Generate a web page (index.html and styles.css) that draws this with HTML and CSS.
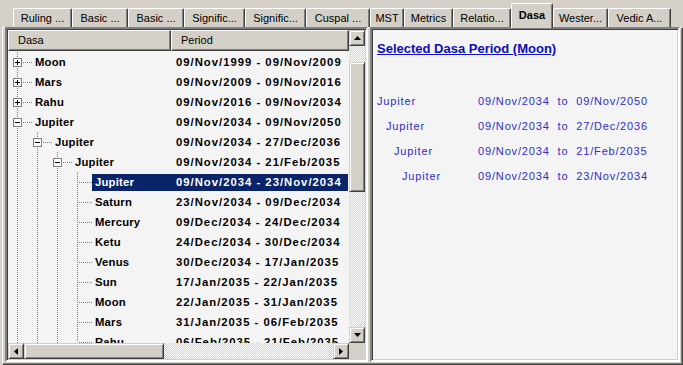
FILE: index.html
```html
<!DOCTYPE html>
<html>
<head>
    <title>Dasa</title>
    <meta charset="utf-8">
    <link rel="stylesheet" href="styles.css">
</head>
<body>
    <div class="tabs">
        <div class="tab t1">Ruling ...</div>
        <div class="tab t2">Basic ...</div>
        <div class="tab t2">Basic ...</div>
        <div class="tab t3">Signific...</div>
        <div class="tab t3">Signific...</div>
        <div class="tab t4">Cuspal ...</div>
        <div class="tab t5">MST</div>
        <div class="tab t6">Metrics</div>
        <div class="tab t7">Relatio...</div>
        <div class="tab active">Dasa</div>
        <div class="tab t8">Wester...</div>
        <div class="tab t9">Vedic A...</div>
    </div>

    <div class="page">
        <!-- dasa tree -->
        <div class="tree">
            <div class="tree-main">
                <div class="hdr">
                    <div class="hcell c1">Dasa</div>
                    <div class="hcell c2">Period</div>
                </div>
                <div class="rows">
                    <div class="row"><i class="node"><b class="box plus"></b></i><div class="cell"><span class="lbl">Moon</span><span class="per">09/Nov/1999 - 09/Nov/2009</span></div></div>
                    <div class="row"><i class="node"><b class="box plus"></b></i><div class="cell"><span class="lbl">Mars</span><span class="per">09/Nov/2009 - 09/Nov/2016</span></div></div>
                    <div class="row"><i class="node"><b class="box plus"></b></i><div class="cell"><span class="lbl">Rahu</span><span class="per">09/Nov/2016 - 09/Nov/2034</span></div></div>
                    <div class="row"><i class="node"><b class="box minus"></b></i><div class="cell"><span class="lbl">Jupiter</span><span class="per">09/Nov/2034 - 09/Nov/2050</span></div></div>
                    <div class="row"><i class="g"></i><i class="node"><b class="box minus"></b></i><div class="cell"><span class="lbl">Jupiter</span><span class="per">09/Nov/2034 - 27/Dec/2036</span></div></div>
                    <div class="row"><i class="g"></i><i class="g"></i><i class="node"><b class="box minus"></b></i><div class="cell"><span class="lbl">Jupiter</span><span class="per">09/Nov/2034 - 21/Feb/2035</span></div></div>
                    <div class="row"><i class="g"></i><i class="g"></i><i class="g"></i><i class="node leaf"></i><div class="cell sel"><span class="lbl">Jupiter</span><span class="per">09/Nov/2034 - 23/Nov/2034</span></div></div>
                    <div class="row"><i class="g"></i><i class="g"></i><i class="g"></i><i class="node leaf"></i><div class="cell"><span class="lbl">Saturn</span><span class="per">23/Nov/2034 - 09/Dec/2034</span></div></div>
                    <div class="row"><i class="g"></i><i class="g"></i><i class="g"></i><i class="node leaf"></i><div class="cell"><span class="lbl">Mercury</span><span class="per">09/Dec/2034 - 24/Dec/2034</span></div></div>
                    <div class="row"><i class="g"></i><i class="g"></i><i class="g"></i><i class="node leaf"></i><div class="cell"><span class="lbl">Ketu</span><span class="per">24/Dec/2034 - 30/Dec/2034</span></div></div>
                    <div class="row"><i class="g"></i><i class="g"></i><i class="g"></i><i class="node leaf"></i><div class="cell"><span class="lbl">Venus</span><span class="per">30/Dec/2034 - 17/Jan/2035</span></div></div>
                    <div class="row"><i class="g"></i><i class="g"></i><i class="g"></i><i class="node leaf"></i><div class="cell"><span class="lbl">Sun</span><span class="per">17/Jan/2035 - 22/Jan/2035</span></div></div>
                    <div class="row"><i class="g"></i><i class="g"></i><i class="g"></i><i class="node leaf"></i><div class="cell"><span class="lbl">Moon</span><span class="per">22/Jan/2035 - 31/Jan/2035</span></div></div>
                    <div class="row"><i class="g"></i><i class="g"></i><i class="g"></i><i class="node leaf"></i><div class="cell"><span class="lbl">Mars</span><span class="per">31/Jan/2035 - 06/Feb/2035</span></div></div>
                    <div class="row"><i class="g"></i><i class="g"></i><i class="g"></i><i class="node leaf last"></i><div class="cell"><span class="lbl">Rahu</span><span class="per">06/Feb/2035 - 21/Feb/2035</span></div></div>
                </div>
            </div>

            <div class="vscroll">
                <div class="sbtn"><svg width="7" height="4" viewBox="0 0 7 4"><polygon points="3.5,0 7,4 0,4" fill="#000"/></svg></div>
                <div class="track vtrack"><div class="thumb vthumb"></div></div>
                <div class="sbtn"><svg width="7" height="4" viewBox="0 0 7 4"><polygon points="0,0 7,0 3.5,4" fill="#000"/></svg></div>
            </div>
            <div class="hscroll">
                <div class="sbtn"><svg width="4" height="7" viewBox="0 0 4 7"><polygon points="4,0 4,7 0,3.5" fill="#000"/></svg></div>
                <div class="track htrack"><div class="thumb hthumb"></div></div>
                <div class="sbtn"><svg width="4" height="7" viewBox="0 0 4 7"><polygon points="0,0 4,3.5 0,7" fill="#000"/></svg></div>
            </div>
            <div class="corner"></div>
        </div>

        <!-- selected period details -->
        <div class="detail">
            <div class="title">Selected Dasa Period (Moon)</div>
            <div class="plist">
                <div class="prow"><span class="pname">Jupiter</span><span class="pdate">09/Nov/2034  to  09/Nov/2050</span></div>
                <div class="prow"><span class="pname i1">Jupiter</span><span class="pdate">09/Nov/2034  to  27/Dec/2036</span></div>
                <div class="prow"><span class="pname i2">Jupiter</span><span class="pdate">09/Nov/2034  to  21/Feb/2035</span></div>
                <div class="prow"><span class="pname i3">Jupiter</span><span class="pdate">09/Nov/2034  to  23/Nov/2034</span></div>
            </div>
        </div>
    </div>
</body>
</html>
```

FILE: styles.css
```css
body {
    margin: 0;
    background-color: #d4d0c8; /* classic dialog gray */
    font-family: "Liberation Sans", Arial, sans-serif;
    font-size: 11px;
    color: #000;
    width: 683px;
    height: 365px;
    overflow: hidden;
}

/* Tab strip */
.tabs {
    display: flex;
    align-items: flex-end;
    height: 27px;
    padding-left: 13px;
    position: relative;
    z-index: 1;
}

.tab {
    box-sizing: border-box;
    height: 19px;
    line-height: 18px;
    text-align: center;
    border-top: 1px solid #fff;
    border-left: 1px solid #fff;
    border-right: 1px solid #404040;
    border-radius: 2px 2px 0 0;
    box-shadow: inset -1px 0 #808080;
    white-space: nowrap;
}

.t1 { width: 59px; }
.t2 { width: 56px; }
.t3 { width: 61px; }
.t4 { width: 64px; }
.t5 { width: 34px; }
.t6 { width: 49px; }
.t7 { width: 58px; }
.t8 { width: 55px; }
.t9 { width: 63px; }

.tab.active {
    width: 42px;
    height: 25px;
    line-height: 22px;
    margin-bottom: -1px;
    font-weight: bold;
    background-color: #d4d0c8;
}

/* Tab page */
.page {
    display: flex;
    gap: 2px;
    height: 338px;
    box-sizing: border-box;
    margin-left: 2px;
    padding: 0 2px 2px 2px;
    border-top: 1px solid #fff;
    border-left: 1px solid #fff;
    border-right: 1px solid #404040;
    border-bottom: 1px solid #404040;
    box-shadow: inset -1px -1px #808080;
}

.tree,
.detail {
    box-sizing: border-box;
    border-style: solid;
    border-width: 2px;
    border-color: #808080 #fff #fff #808080;
    box-shadow: inset 1px 1px #404040, inset -1px -1px #d4d0c8;
    background-color: #f4f4f4;
}

.tree {
    width: 363px;
    display: grid;
    grid-template-columns: 1fr 16px;
    grid-template-rows: 1fr 16px;
    padding: 1px;
    margin-top: -1px;
}

.tree-main {
    overflow: hidden;
}

/* Column header */
.hdr {
    display: flex;
    height: 21px;
}

.hcell {
    box-sizing: border-box;
    padding-left: 9px;
    line-height: 19px;
    border-top: 1px solid #fff;
    border-left: 1px solid #fff;
    border-right: 1px solid #404040;
    border-bottom: 1px solid #404040;
    box-shadow: inset -1px -1px #808080;
    background-color: #d4d0c8;
}

.c1 { width: 163px; }
.c2 { flex: 1; }

/* Tree rows */
.rows {
    padding-top: 1px;
}

.row {
    display: flex;
    align-items: center;
    height: 20px;
    font-size: 11.3px;
    font-weight: bold;
}

.g,
.node {
    display: flex;
    align-items: center;
    align-self: stretch;
    flex: none;
    background: repeating-linear-gradient(to bottom, #808080 0 1px, transparent 1px 2px) 9px 0 / 1px 100% no-repeat;
}

.g { width: 20px; }

.node {
    width: 24px;
    background:
        repeating-linear-gradient(to bottom, #808080 0 1px, transparent 1px 2px) 9px 0 / 1px 100% no-repeat,
        repeating-linear-gradient(to right, #808080 0 1px, transparent 1px 2px) 11px 10px / 13px 1px no-repeat;
}

.node.last {
    background:
        repeating-linear-gradient(to bottom, #808080 0 1px, transparent 1px 2px) 9px 0 / 1px 10px no-repeat,
        repeating-linear-gradient(to right, #808080 0 1px, transparent 1px 2px) 11px 10px / 13px 1px no-repeat;
}

.box {
    width: 9px;
    height: 9px;
    box-sizing: border-box;
    margin-left: 5px;
    border: 1px solid #808080;
}

.minus {
    background: linear-gradient(#000, #000) 1px 3px / 5px 1px no-repeat, #fff;
}

.plus {
    background:
        linear-gradient(#000, #000) 1px 3px / 5px 1px no-repeat,
        linear-gradient(#000, #000) 3px 1px / 1px 5px no-repeat,
        #fff;
}

.cell {
    display: flex;
    flex: 1;
    height: 17px;
    line-height: 17px;
    padding-left: 3px;
    white-space: nowrap;
}

.lbl {
    flex: 1;
    letter-spacing: 0.2px;
}

.per {
    width: 173px;
    flex: none;
    letter-spacing: 1px;
}

.cell.sel {
    background-color: #0a246a;
    color: #fff;
    margin-right: 1px;
}

.cell.sel .per { width: 172px; }

/* Scroll bars */
.vscroll {
    display: flex;
    flex-direction: column;
}

.hscroll {
    display: flex;
}

.sbtn {
    box-sizing: border-box;
    width: 16px;
    height: 16px;
    flex: none;
    display: flex;
    align-items: center;
    justify-content: center;
    border-top: 1px solid #d4d0c8;
    border-left: 1px solid #d4d0c8;
    border-right: 1px solid #404040;
    border-bottom: 1px solid #404040;
    box-shadow: inset 1px 1px #fff, inset -1px -1px #808080;
    background-color: #d4d0c8;
}

.track {
    flex: 1;
    background: repeating-conic-gradient(#fff 0 25%, #d4d0c8 0 50%) 0 0 / 2px 2px;
}

.thumb {
    box-sizing: border-box;
    border-top: 1px solid #d4d0c8;
    border-left: 1px solid #d4d0c8;
    border-right: 1px solid #404040;
    border-bottom: 1px solid #404040;
    box-shadow: inset 1px 1px #fff, inset -1px -1px #808080;
    background-color: #d4d0c8;
}

.vthumb {
    height: 130px;
    margin-top: 16px;
}

.htrack {
    display: flex;
}

.hthumb {
    width: 140px;
}

.corner {
    background-color: #d4d0c8;
}

/* Detail pane */
.detail {
    flex: 1;
    padding: 12px 0 0 5px;
    margin-top: -1px;
    color: #2e2ec8;
}

.title {
    font-size: 13px;
    font-weight: bold;
    line-height: 16px;
    color: #0c0cc0;
    text-decoration: underline;
}

.plist {
    margin-top: 32px;
}

.prow {
    display: flex;
    height: 25px;
    line-height: 25px;
    font-size: 11px;
    letter-spacing: 0.85px;
}

.pname {
    width: 101px;
    box-sizing: border-box;
}

.i1 { padding-left: 9px; }
.i2 { padding-left: 17px; }
.i3 { padding-left: 25px; }

.pdate {
    white-space: pre;
}
```
